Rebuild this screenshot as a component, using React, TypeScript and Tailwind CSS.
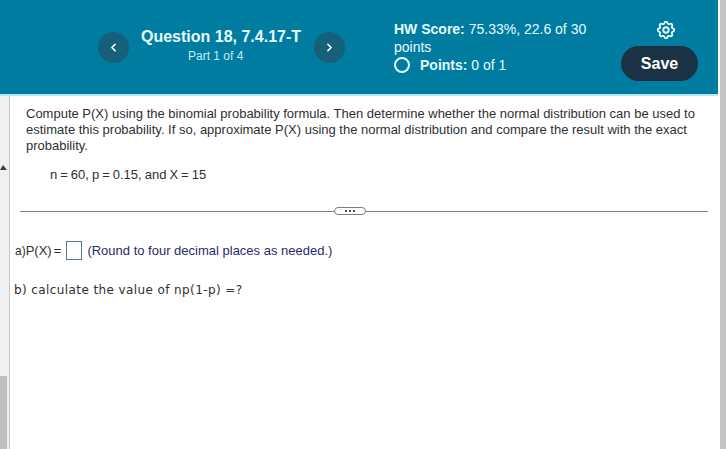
import { ChevronLeft, ChevronRight } from 'lucide-react'
import { TbSettings } from 'react-icons/tb'

export default function App() {
  return (
    <div className="flex h-[449px] w-[726px] overflow-hidden bg-white font-['Liberation_Sans',Arial,sans-serif]">
      <div className="flex w-[718px] flex-col">
        {/* Top bar */}
        <header className="flex h-[96px] shrink-0 border-b-2 border-[#b4e8f4] bg-[#007ca0] text-white">
          <div className="ml-[98px] mt-[32px]">
            <button className="flex h-[31px] w-[31px] items-center justify-center rounded-full bg-[#17607c]">
              <ChevronLeft size={13} strokeWidth={3} />
            </button>
          </div>
          <div className="ml-[12px] w-[161px] pt-[27px]">
            <div className="text-[16px] leading-[20px] font-bold whitespace-nowrap text-[#e6fbff]">Question 18, 7.4.17-T</div>
            <div className="pl-[47px] pt-[1px] text-[12px] leading-[16px] text-[#c4eef8]">Part 1 of 4</div>
          </div>
          <div className="ml-[12px] mt-[32px]">
            <button className="flex h-[31px] w-[31px] items-center justify-center rounded-full bg-[#17607c]">
              <ChevronRight size={13} strokeWidth={3} />
            </button>
          </div>
          <div className="ml-[49px] w-[210px] pt-[20px] text-[14px] leading-[18px] text-[#e6fbff]">
            <div>
              <span className="font-bold">HW Score:</span> 75.33%, 22.6 of 30 points
            </div>
            <div className="flex items-center">
              <span className="mr-[10px] h-[16px] w-[16px] rounded-full border-2 border-[#e6fbff]" />
              <span>
                <span className="font-bold">Points:</span> 0 of 1
              </span>
            </div>
          </div>
          <div className="ml-[17px] flex w-[77px] flex-col items-center pt-[19px]">
            <TbSettings size={22} color="#e6fbff" className="ml-[13px]" />
            <button className="mt-[5px] h-[35px] w-[77px] rounded-full bg-[#1b3244] text-[16px] font-bold text-white">Save</button>
          </div>
        </header>

        <div className="flex min-h-0 flex-1">
          {/* Left scroll gutter */}
          <div className="flex w-[10px] shrink-0 flex-col border-r border-[#c8c8c8] bg-[#f0f0f0]">
            <div className="h-[69px]" />
            <svg width="7" height="5" viewBox="0 0 7 5" className="shrink-0">
              <path d="M0 5 L3 0 L7 5 Z" fill="#404040" />
            </svg>
            <div className="h-[206px] shrink-0" />
            <div className="h-[73px] w-[7px] shrink-0 bg-[#c0c0c0]" />
          </div>

          <main className="min-w-0 flex-1 text-[13px] text-[#303030]">
            <p className="mt-[10px] ml-[16px] w-[680px] leading-[16px]">
              Compute P(X) using the binomial probability formula. Then determine whether the normal distribution can be used to estimate this probability. If so, approximate P(X) using the normal distribution and compare the result with the exact probability.
            </p>
            <p className="mt-[13px] ml-[40px] leading-[16px] [word-spacing:-0.6px]">n = 60, p = 0.15, and X = 15</p>

            <div className="mt-[24px] ml-[10px] flex w-[688px] items-center">
              <div className="h-px w-[314px] bg-[#808080]" />
              <div className="flex h-[8px] w-[32px] items-center justify-center gap-[2px] rounded-full border border-[#70808c] bg-white">
                <span className="h-[2px] w-[2px] bg-[#40505c]" />
                <span className="h-[2px] w-[2px] bg-[#40505c]" />
                <span className="h-[2px] w-[2px] bg-[#40505c]" />
              </div>
              <div className="h-px flex-1 bg-[#808080]" />
            </div>

            <div className="mt-[26px] ml-[5px] flex items-center">
              <span className="text-[12px]">a)</span>
              <span className="[word-spacing:-1.5px]">P(X) =</span>
              <span className="mx-[5px] h-[19px] w-[16px] border border-[#5a7a94] bg-white" />
              <span className="text-[#2a2a70]">(Round to four decimal places as needed.)</span>
            </div>

            <p className="mt-[21px] ml-[4px] font-['DejaVu_Sans',sans-serif] text-[12px] leading-[16px] tracking-[0.4px]">b) calculate the value of np(1-p) =?</p>
          </main>
        </div>
      </div>
      <div className="ml-[2px] w-[6px] bg-[#c4c4c4]" />
    </div>
  )
}
